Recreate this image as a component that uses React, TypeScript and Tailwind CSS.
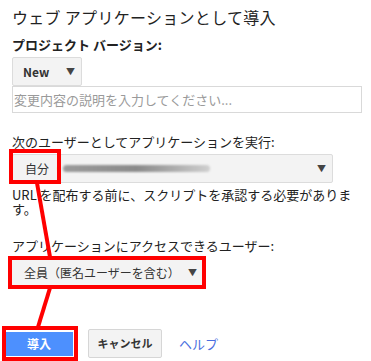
import React from "react";

const font = {
  fontFamily: '"Noto Sans CJK JP", "Noto Sans", "Liberation Sans", sans-serif',
};

function Arrow() {
  return <span className="text-[9px] leading-none text-[#444]">▼</span>;
}

function Annotations() {
  return (
    <>
      <div className="absolute left-[9px] top-[149px] h-[35px] w-[52px] border-[4px] border-[#ff0000]" />
      <div className="absolute left-[8px] top-[256px] h-[33px] w-[198px] border-[4px] border-[#ff0000]" />
      <div className="absolute left-[2px] top-[326px] h-[35px] w-[76px] border-[4px] border-[#ff0000]" />
      <svg className="absolute left-0 top-0" width="371" height="361">
        <line x1="37" y1="183" x2="50" y2="257" stroke="#ff0000" strokeWidth="4" />
        <line x1="50" y1="288" x2="38" y2="327" stroke="#ff0000" strokeWidth="4" />
      </svg>
    </>
  );
}

export default function App() {
  return (
    <div
      className="relative h-[361px] w-[371px] overflow-hidden bg-white pl-[12px] text-[#222]"
      style={font}
    >
      <h1 className="pt-[7px] text-[16px] leading-[20px] tracking-[0.3px]">
        ウェブ アプリケーションとして導入
      </h1>

      <p className="mt-[10px] text-[13px] font-bold leading-[16px]">
        プロジェクト バージョン:
      </p>
      <div className="mt-[4px] flex h-[29px] w-[70px] items-center justify-between rounded-[2px] border border-[#dcdcdc] bg-[#f3f3f3] pl-[10px] pr-[6px]">
        <span className="text-[12px] font-bold leading-none text-[#333]">New</span>
        <Arrow />
      </div>
      <div className="flex h-[27px] w-[350px] items-center border border-[#d9d9d9] bg-white pl-[1px]">
        <span className="text-[13px] leading-none text-[#9a9a9a]">変更内容の説明を入力してください...</span>
      </div>

      <p className="mt-[21px] text-[13px] leading-[16px]">
        次のユーザーとしてアプリケーションを実行:
      </p>
      <div className="mt-[4px] flex h-[29px] w-[321px] items-center justify-between rounded-[2px] border border-[#dcdcdc] bg-[#f3f3f3] pl-[12px] pr-[6px]">
        <div className="flex items-center">
          <span className="text-[12px] leading-none text-[#333]">自分（</span>
          <div className="ml-[2px] h-[7px] w-[147px] rounded-full bg-gradient-to-r from-[#9a9a9a] via-[#8a8a8a] to-[#d0d0d0] blur-[1px]" />
        </div>
        <Arrow />
      </div>
      <p className="mt-[5px] w-[345px] text-[13px] leading-[14px]">
        URL を配布する前に、スクリプトを承認する必要があります。
      </p>

      <p className="mt-[22px] text-[13px] leading-[16px]">
        アプリケーションにアクセスできるユーザー:
      </p>
      <div className="mt-[6px] flex h-[25px] w-[190px] items-center justify-between bg-[#f3f3f3] pl-[12px] pr-[5px]">
        <span className="text-[12px] leading-none text-[#333]">全員（匿名ユーザーを含む）</span>
        <Arrow />
      </div>

      <div className="mt-[44px] flex items-center">
        <button className="ml-[-7px] flex h-[24px] w-[68px] items-center justify-center bg-[#4d90fe] text-[12px] font-bold leading-none text-white">
          導入
        </button>
        <button className="ml-[15px] flex h-[29px] w-[74px] items-center justify-center rounded-[2px] border border-[#d6d6d6] bg-[#f3f3f3] text-[11px] font-bold leading-none text-[#333]">
          キャンセル
        </button>
        <span className="ml-[17px] text-[13px] leading-none text-[#4a6ee0]">ヘルプ</span>
      </div>

      <Annotations />
    </div>
  );
}
